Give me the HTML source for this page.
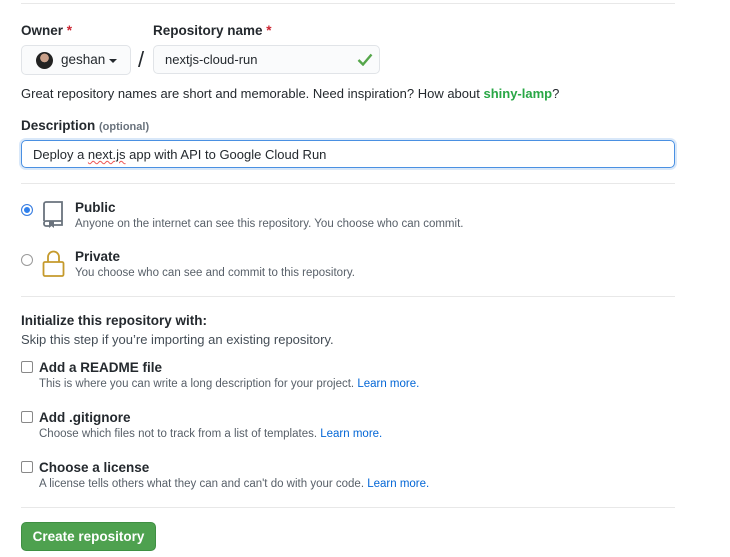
<!DOCTYPE html>
<html><head><style>
*{margin:0;padding:0;box-sizing:border-box}
body{width:730px;height:557px;background:#fff;font-family:"Liberation Sans",sans-serif;color:#24292e;position:relative;overflow:hidden}
.a{position:absolute;white-space:nowrap}
.hr{position:absolute;left:21px;width:654px;height:1px;background:#e8e8e8}
.lbl{font-size:13.5px;font-weight:bold}
.req{color:#cb2431}
.t{font-size:13px}
.s{font-size:11.5px;color:#586069}
.lnk{color:#0366d6}
.cb{position:absolute;left:21px;width:12px;height:12px;border:1px solid #888;border-radius:2px;background:#fff}
</style></head><body>
<div class="hr" style="top:3px"></div>
<div class="a lbl" style="left:21px;top:23px">Owner <span class="req">*</span></div>
<div class="a lbl" style="left:153px;top:23px">Repository name <span class="req">*</span></div>
<div class="a" style="left:21px;top:45px;width:110px;height:30px;border:1px solid #e1e4e8;border-radius:5px;background:#fafbfc"></div>
<div class="a" style="left:36px;top:52px;width:17px;height:17px;border-radius:50%;background:radial-gradient(circle at 50% 35%,#c9a08a 0 30%,#222 32%)"></div>
<div class="a" style="left:61px;top:52px;font-size:13.5px;color:#24292e">geshan</div>
<div class="a" style="left:109px;top:59px;border-left:4px solid transparent;border-right:4px solid transparent;border-top:4px solid #24292e"></div>
<div class="a" style="left:138px;top:47px;font-size:22px;color:#24292e">/</div>
<div class="a" style="left:153px;top:45px;width:227px;height:29px;border:1px solid #e1e4e8;border-radius:5px;background:#fafbfc"></div>
<div class="a t" style="left:165px;top:52px">nextjs-cloud-run</div>
<svg class="a" style="left:357px;top:53px" width="16" height="13" viewBox="0 0 16 13"><path d="M1.5 7l4.5 4.5L14.5 1.5" fill="none" stroke="#55a64a" stroke-width="2.4"/></svg>
<div class="a t" style="left:21px;top:86px">Great repository names are short and memorable. Need inspiration? How about <b style="color:#28a745">shiny-lamp</b>?</div>
<div class="a lbl" style="left:21px;top:118px">Description <span style="font-size:11px;color:#6a737d">(optional)</span></div>
<div class="a" style="left:21px;top:140px;width:654px;height:28px;border:1.5px solid #4a90e2;border-radius:5px;box-shadow:0 0 0 2px rgba(3,102,214,.15)"></div>
<div class="a t" style="left:33px;top:147px">Deploy a <span style="text-decoration:underline wavy #e55;text-decoration-thickness:1px">next.js</span> app with API to Google Cloud Run</div>
<div class="hr" style="top:183px"></div>
<div class="a" style="left:21px;top:204px;width:12px;height:12px;border-radius:50%;border:1px solid #3a7ee0;box-shadow:inset 0 0 0 2px #fff;background:#2f80ed"></div>
<svg class="a" style="left:42px;top:200px" width="23" height="29" viewBox="0 0 23 29"><path d="M2 21V4a2 2 0 0 1 2-2h16v19H4a2 2 0 0 0-2 2v1a2 2 0 0 0 2 2h3M12 25h8v-4" fill="none" stroke="#6a737d" stroke-width="1.8"/><path d="M7 21h5v7l-2.5-2L7 28z" fill="#6a737d"/></svg>
<div class="a lbl" style="left:75px;top:200px">Public</div>
<div class="a s" style="left:75px;top:218px">Anyone on the internet can see this repository. You choose who can commit.</div>
<div class="a" style="left:21px;top:254px;width:12px;height:12px;border-radius:50%;border:1px solid #999"></div>
<svg class="a" style="left:42px;top:249px" width="23" height="29" viewBox="0 0 23 29"><path d="M6 13V8a5.5 5.5 0 0 1 11 0v5" fill="none" stroke="#c59a2c" stroke-width="1.8"/><rect x="1.5" y="13" width="20" height="14" rx="1.5" fill="none" stroke="#c59a2c" stroke-width="1.8"/></svg>
<div class="a lbl" style="left:75px;top:249px">Private</div>
<div class="a s" style="left:75px;top:267px">You choose who can see and commit to this repository.</div>
<div class="hr" style="top:296px"></div>
<div class="a lbl" style="left:21px;top:313px">Initialize this repository with:</div>
<div class="a t" style="left:21px;top:332px;color:#444d56">Skip this step if you’re importing an existing repository.</div>
<div class="cb" style="top:361px"></div>
<div class="a lbl" style="left:39px;top:360px">Add a README file</div>
<div class="a s" style="left:39px;top:378px">This is where you can write a long description for your project. <span class="lnk">Learn more.</span></div>
<div class="cb" style="top:411px"></div>
<div class="a lbl" style="left:39px;top:410px">Add .gitignore</div>
<div class="a s" style="left:39px;top:428px">Choose which files not to track from a list of templates. <span class="lnk">Learn more.</span></div>
<div class="cb" style="top:461px"></div>
<div class="a lbl" style="left:39px;top:460px">Choose a license</div>
<div class="a s" style="left:39px;top:478px">A license tells others what they can and can't do with your code. <span class="lnk">Learn more.</span></div>
<div class="hr" style="top:507px"></div>
<div class="a" style="left:21px;top:522px;width:135px;height:29px;background:#4ea14f;border:1px solid #3f8f43;border-radius:5px;color:#fff;font-size:13.5px;font-weight:bold;text-align:center;line-height:27px">Create repository</div>
</body></html>
